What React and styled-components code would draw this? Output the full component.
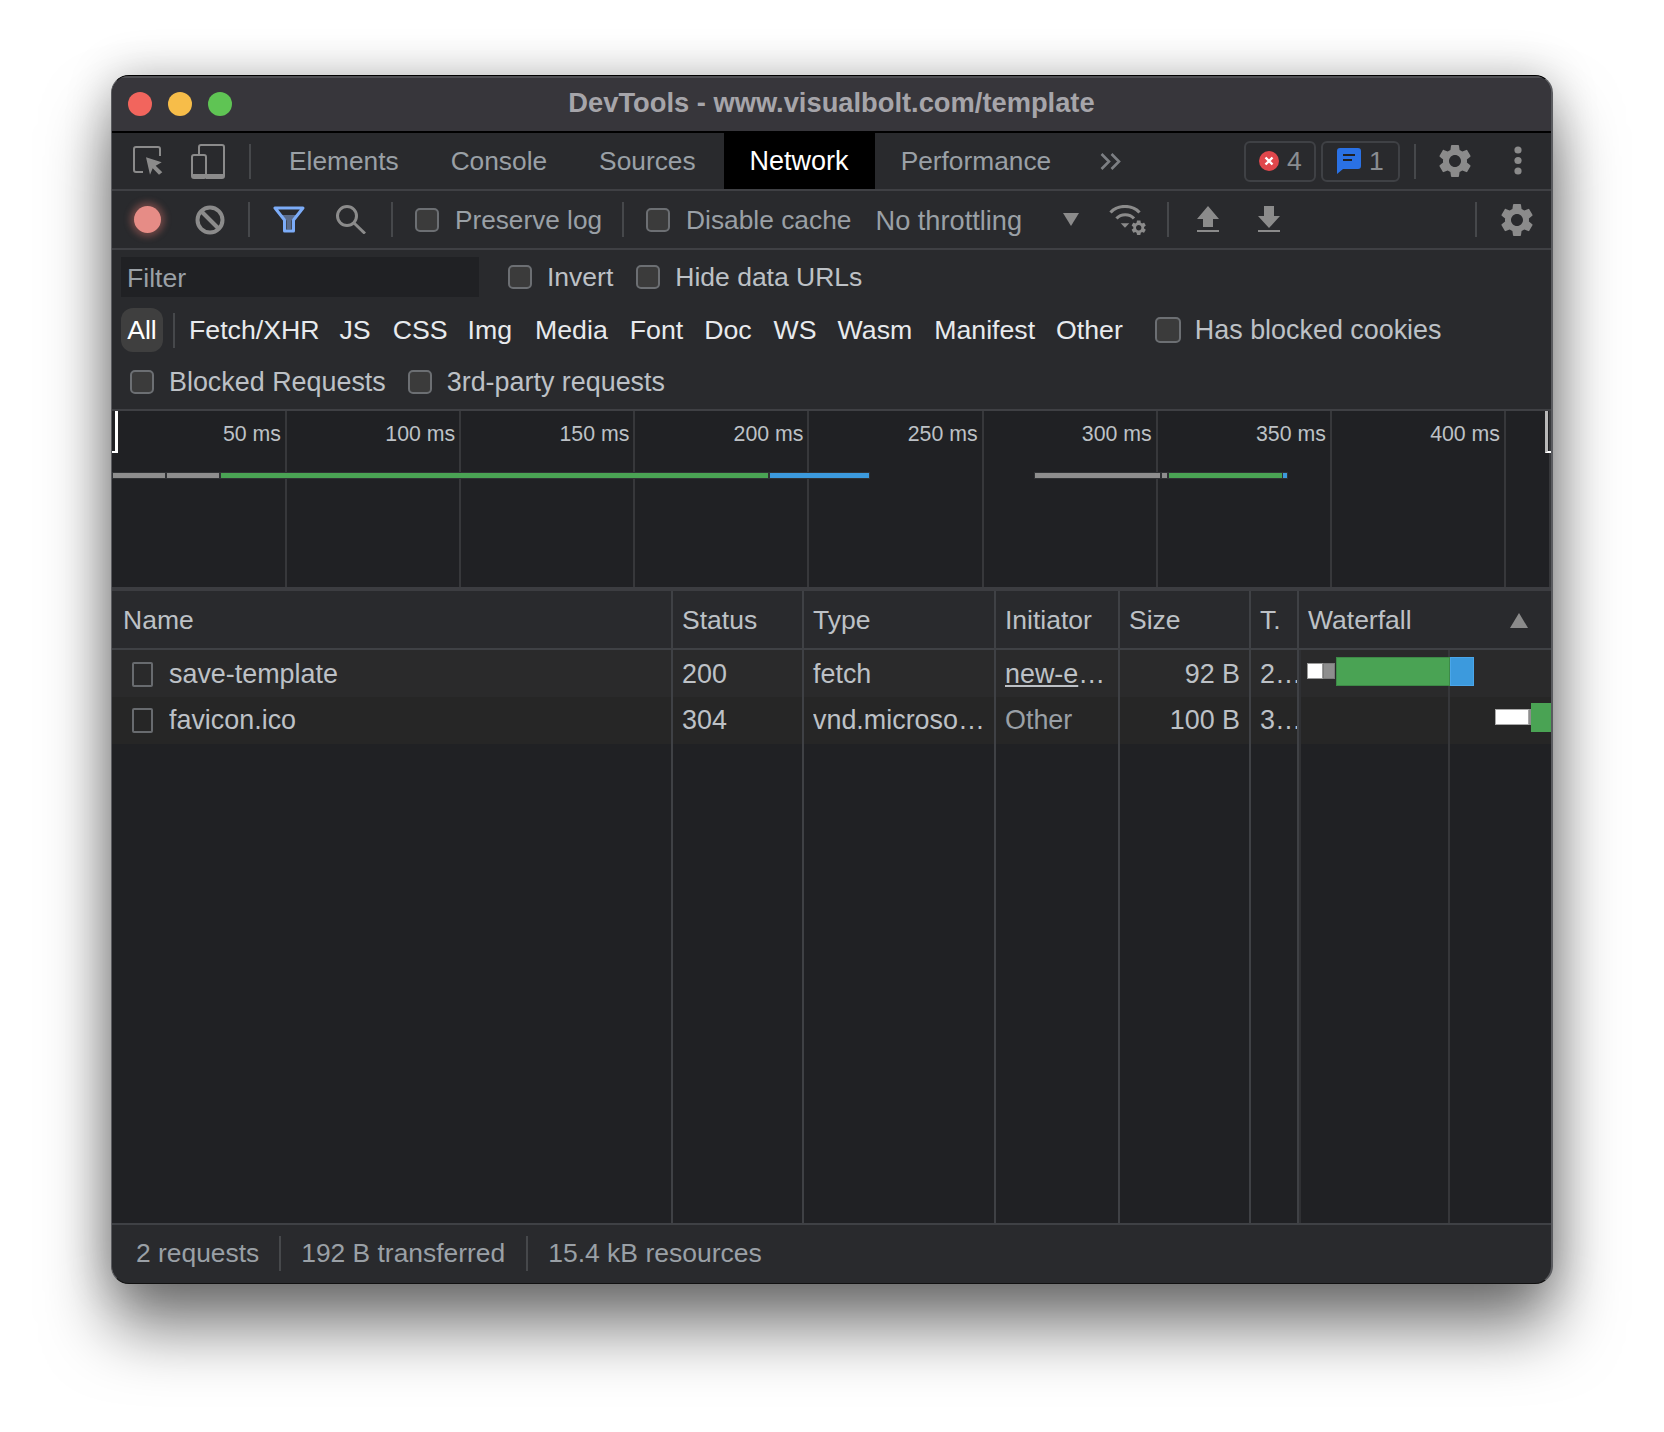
import React from 'react';
import styled, { createGlobalStyle, css } from 'styled-components';
import { MdSettings } from 'react-icons/md';

const GEAR =
    'M19.14 12.94c.04-.3.06-.61.06-.94 0-.32-.02-.64-.07-.94l2.03-1.58c.18-.14.23-.41.12-.61l-1.92-3.32c-.12-.22-.37-.29-.59-.22l-2.39.96c-.5-.38-1.03-.7-1.62-.94l-.36-2.54c-.04-.24-.24-.41-.48-.41h-3.84c-.24 0-.43.17-.47.41l-.36 2.54c-.59.24-1.13.57-1.62.94l-2.39-.96c-.22-.08-.47 0-.59.22L2.74 8.87c-.12.21-.08.47.12.61l2.03 1.58c-.05.3-.09.63-.09.94s.02.64.07.94l-2.03 1.58c-.18.14-.23.41-.12.61l1.92 3.32c.12.22.37.29.59.22l2.39-.96c.5.38 1.03.7 1.62.94l.36 2.54c.05.24.24.41.48.41h3.84c.24 0 .44-.17.47-.41l.36-2.54c.59-.24 1.13-.56 1.62-.94l2.39.96c.22.08.47 0 .59-.22l1.92-3.32c.12-.22.07-.47-.12-.61l-2.01-1.58zM12 15.6c-1.98 0-3.6-1.62-3.6-3.6s1.62-3.6 3.6-3.6 3.6 1.62 3.6 3.6-1.62 3.6-3.6 3.6z';

const GlobalStyle = createGlobalStyle`
    html, body {
        margin: 0;
        background: #ffffff;
    }
    body {
        font-family: "Liberation Sans", Arial, sans-serif;
        font-size: 26.6px;
    }
    * {
        box-sizing: border-box;
    }
`;

const spaced = css`
    margin-left: ${(p) => p.$ml || 0}px;
`;

const Page = styled.div`
    width: 1664px;
    height: 1432px;
    padding: 75px 0 0 111px;
    overflow: hidden;
`;

const Window = styled.div`
    width: 1442px;
    height: 1209px;
    display: flex;
    flex-direction: column;
    overflow: hidden;
    background: #292a2d;
    border: 1px solid #5a5b5f;
    border-right-width: 2px;
    border-top: 1px solid #000;
    border-bottom: 1px solid #111;
    border-radius: 18px;
    box-shadow: 0 44px 66px rgba(0, 0, 0, 0.52), 0 0 46px rgba(0, 0, 0, 0.24);
`;

const TitleBar = styled.div`
    height: 57px;
    flex: none;
    display: grid;
    grid-template-columns: 1fr auto 1fr;
    align-items: center;
    padding-bottom: 1px;
    background: #37363b;
    border-top: 2px solid #505054;
    border-bottom: 2px solid #000;
`;

const Lights = styled.div`
    display: flex;
    gap: 16px;
    padding-left: 16px;
`;

const Light = styled.span`
    width: 24px;
    height: 24px;
    border-radius: 50%;
    background: ${(p) => p.$color};
`;

const Title = styled.div`
    font-size: 27.3px;
    font-weight: 700;
    color: #a6a5aa;
    line-height: 30px;
    padding-bottom: 2px;
`;

const TabBar = styled.div`
    height: 58px;
    flex: none;
    display: flex;
    align-items: stretch;
    border-bottom: 2px solid #3f4044;
`;

const Tab = styled.div`
    display: flex;
    align-items: center;
    padding: 0 26px;
    font-size: ${(p) => (p.$active ? '27px' : '26.3px')};
    color: ${(p) => (p.$active ? '#ffffff' : '#9aa0a6')};
    background: ${(p) => (p.$active ? '#000000' : 'transparent')};
    ${spaced}
`;

const Sep = styled.span`
    flex: none;
    width: 2px;
    height: 35px;
    align-self: center;
    background: #46484b;
    ${spaced}
`;

const Icon = styled.svg`
    flex: none;
    display: block;
    align-self: center;
    ${spaced}
`;

const Gear = styled(MdSettings)`
    flex: none;
    align-self: center;
    color: #8b8b8b;
    ${spaced}
`;

const BadgeGroup = styled.div`
    display: flex;
    align-items: center;
    margin-left: auto;
    padding-right: 29px;
`;

const Badge = styled.div`
    height: 41px;
    width: ${(p) => p.$w}px;
    display: flex;
    align-items: center;
    gap: 8px;
    padding-left: ${(p) => p.$pad}px;
    color: #8a8d91;
    border: 2px solid #3f4145;
    border-radius: 6px;
    ${spaced}
`;

const Toolbar = styled.div`
    height: 59px;
    flex: none;
    display: flex;
    align-items: center;
    border-bottom: 2px solid #3f4044;
`;

const RecordDot = styled.span`
    flex: none;
    width: 27px;
    height: 27px;
    border-radius: 50%;
    background: #e68c86;
    box-shadow: 0 0 6px 4px rgba(230, 120, 110, 0.34);
    ${spaced}
`;

const Check = styled.span`
    flex: none;
    width: ${(p) => p.$size || 24}px;
    height: ${(p) => p.$size || 24}px;
    background: #3b3b3b;
    border: 2px solid #6c6f73;
    border-radius: 5px;
    ${spaced}
`;

const Label = styled.span`
    flex: none;
    white-space: nowrap;
    padding-top: ${(p) => p.$dy || 0}px;
    font-size: ${(p) => p.$size || 26.5}px;
    color: ${(p) => p.$color || '#9aa0a6'};
    ${spaced}
`;

const FilterRow = styled.div`
    display: flex;
    align-items: center;
    height: 54px;
    flex: none;
`;

const FilterInput = styled.div`
    width: 358px;
    height: 40px;
    margin-left: 9px;
    padding: 3px 0 0 6px;
    flex: none;
    display: flex;
    align-items: center;
    color: #9aa0a6;
    background: #202124;
`;

const TagRow = styled.div`
    height: 52px;
    flex: none;
    display: flex;
    align-items: center;
`;

const TagPill = styled.span`
    display: flex;
    align-items: center;
    justify-content: center;
    flex: none;
    width: 42px;
    height: 44px;
    margin-left: 9px;
    color: #ffffff;
    background: #3f3f3f;
    border-radius: 12px;
`;

const Tag = styled.span`
    flex: none;
    font-size: 26.7px;
    color: #e8eaed;
    ${spaced}
`;

const ThirdRow = styled.div`
    height: 53px;
    flex: none;
    display: flex;
    align-items: center;
    padding-bottom: 1px;
`;

const Overview = styled.div`
    height: 182px;
    flex: none;
    position: relative;
    display: grid;
    grid-template-columns: 175px repeat(7, 174.15px) 1fr;
    background: #202124;
    border-top: 2px solid #3f4044;
    border-bottom: 4px solid #3c3d41;
`;

const Tick = styled.div`
    padding: 9px 4px 0 0;
    text-align: right;
    font-size: 21.3px;
    line-height: 28px;
    color: #bdc1c6;
    border-right: 2px solid #37383b;
    &:last-child {
        border-right: 0;
    }
`;

const Handle = styled.span`
    position: absolute;
    top: 0;
    ${(p) => (p.$right ? 'right: 0;' : 'left: 0;')}
    width: 6px;
    height: 42px;
    border-bottom: 2px solid #fff;
    ${(p) => (p.$right ? 'border-left: 3px solid #b9b9b9;' : 'border-right: 3px solid #fff;')}
`;

const BarTrack = styled.div`
    position: absolute;
    left: 0;
    top: 62px;
    height: 6px;
    display: flex;
`;

const Seg = styled.span`
    flex: none;
    width: ${(p) => p.$w}px;
    height: 5px;
    background: ${(p) => p.$color};
    box-shadow: 0 0 0 1px #2f3134;
    ${spaced}
`;

const columns = css`
    display: grid;
    grid-template-columns: 561px 131px 192px 124px 131px 48px 1fr;
`;

const TableHead = styled.div`
    ${columns}
    height: 59px;
    flex: none;
    font-size: 26.5px;
    color: #bdc1c6;
    border-bottom: 2px solid #3f4145;
`;

const HeadCell = styled.div`
    display: flex;
    align-items: center;
    justify-content: space-between;
    padding: 2px ${(p) => (p.$last ? 23 : 0)}px 0 ${(p) => (p.$first ? 11 : 9)}px;
    overflow: hidden;
    white-space: nowrap;
    border-right: ${(p) => (p.$last ? 0 : '2px solid #3f4145')};
`;

const TableBody = styled.div`
    flex: 1;
    min-height: 0;
    display: flex;
    flex-direction: column;
    background: #202124;
`;

const Cell = styled.div`
    display: flex;
    align-items: center;
    gap: 16px;
    min-width: 0;
    padding: 0 ${(p) => (p.$end ? 9 : p.$tight ? 0 : 9)}px 0 ${(p) => (p.$first ? 20 : 9)}px;
    justify-content: ${(p) => (p.$end ? 'flex-end' : 'flex-start')};
    font-size: 26.9px;
    color: ${(p) => p.$color || '#bdc1c6'};
    border-right: 2px solid #3f4145;
`;

const Row = styled.div`
    ${columns}
    flex: ${(p) => (p.$fill ? '1' : 'none')};
    height: ${(p) => (p.$fill ? 'auto' : '47px')};
    background: ${(p) => p.$bg || 'transparent'};
`;

const FirstRow = styled(Row)`
    ${Cell} {
        padding-top: 2px;
    }
`;

const CellText = styled.span`
    display: block;
    min-width: 0;
    overflow: hidden;
    white-space: nowrap;
    text-overflow: ellipsis;
    text-decoration: ${(p) => (p.$link ? 'underline' : 'none')};
`;

const FileBox = styled.span`
    flex: none;
    width: 21px;
    height: 25px;
    border: 2px solid #686b6f;
    border-radius: 2px;
`;

const WaterfallCell = styled.div`
    display: flex;
    align-items: flex-start;
    overflow: hidden;
    padding-left: ${(p) => p.$pad || 0}px;
    border-left: 2px solid #2f3033;
    background-image: linear-gradient(#36373a, #36373a);
    background-repeat: no-repeat;
    background-size: 2px 100%;
    background-position: 147px 0;
`;

const WfBar = styled.span`
    flex: none;
    width: ${(p) => p.$w}px;
    height: ${(p) => p.$h}px;
    margin-top: ${(p) => p.$top}px;
    background: ${(p) => p.$color};
    box-shadow: inset 0 0 0 1px ${(p) => p.$edge};
    ${spaced}
`;

const Footer = styled.div`
    height: 60px;
    flex: none;
    display: flex;
    align-items: center;
    padding-bottom: 2px;
    color: #9aa0a6;
    border-top: 2px solid #3f4145;
`;

function InspectIcon() {
    return (
        <Icon $ml={21} width="30" height="30" viewBox="0 0 30 30">
            <path d="M10 26H3a2 2 0 0 1-2-2V3a2 2 0 0 1 2-2h22a2 2 0 0 1 2 2v7" fill="none" stroke="#8b8b8b" strokeWidth="2" />
            <path d="M13 11.3l15.7 5-6 3.4 6.600 6.600-3.300 2.400-6.300-6.400-2.700 6.400z" fill="#8b8b8b" />
        </Icon>
    );
}

function DeviceIcon() {
    return (
        <Icon $ml={28} width="34" height="35" viewBox="0 0 34 35">
            <path d="M8 11V3a2 2 0 0 1 2-2h21a2 2 0 0 1 2 2v29a2 2 0 0 1-2 2H15" fill="none" stroke="#8b8b8b" strokeWidth="2" />
            <rect x="1" y="11" width="14" height="23" rx="2" fill="none" stroke="#8b8b8b" strokeWidth="2" />
            <rect x="1" y="30" width="32" height="4" fill="#8b8b8b" />
        </Icon>
    );
}

function ChevronsIcon() {
    return (
        <Icon $ml={23} width="21" height="17" viewBox="0 0 21 17">
            <path d="M1.500 1l7.500 7.500-7.500 7.500M11.500 1l7.500 7.500-7.500 7.500" fill="none" stroke="#7c7f83" strokeWidth="2.600" />
        </Icon>
    );
}

function ErrorIcon() {
    return (
        <svg width="20" height="20" viewBox="0 0 20 20">
            <circle cx="10" cy="10" r="10" fill="#e0474c" />
            <path d="M6.500 6.500l7 7M13.500 6.500l-7 7" stroke="#fff" strokeWidth="2.400" />
        </svg>
    );
}

function MessageIcon() {
    return (
        <svg width="24" height="26" viewBox="0 0 24 26">
            <path d="M3 0h18a3 3 0 0 1 3 3v15a3 3 0 0 1-3 3H6l-6 5V3a3 3 0 0 1 3-3z" fill="#2a71e4" />
            <path d="M6 7h12M6 12h9" stroke="#202124" strokeWidth="2.200" />
        </svg>
    );
}

function DotsIcon() {
    return (
        <Icon $ml={39} width="8" height="30" viewBox="0 0 8 30">
            <circle cx="4" cy="4" r="3.600" fill="#8b8b8b" />
            <circle cx="4" cy="14.500" r="3.600" fill="#8b8b8b" />
            <circle cx="4" cy="25" r="3.600" fill="#8b8b8b" />
        </Icon>
    );
}

function BlockIcon() {
    return (
        <Icon $ml={34} width="30" height="30" viewBox="0 0 30 30">
            <circle cx="15" cy="15" r="12.500" fill="none" stroke="#8b8b8b" strokeWidth="4" />
            <path d="M6.500 6.500l17 17" stroke="#8b8b8b" strokeWidth="4" />
        </Icon>
    );
}

function FilterIcon() {
    return (
        <Icon $ml={23} width="32" height="27" viewBox="0 0 32 27">
            <path d="M8 9h16l-5.500 5.500V23.500h-5V14.500z" fill="#5b6c8a" />
            <path d="M2 2h28L20.500 14v11h-9V14z" fill="none" stroke="#7cacf8" strokeWidth="3" strokeLinejoin="round" />
        </Icon>
    );
}

function SearchIcon() {
    return (
        <Icon $ml={30} width="31" height="29" viewBox="0 0 31 29">
            <circle cx="12" cy="11" r="9.500" fill="none" stroke="#8b8b8b" strokeWidth="3" />
            <path d="M19 18l11 10.500" stroke="#8b8b8b" strokeWidth="3" />
        </Icon>
    );
}

function CaretIcon({ ml }) {
    return (
        <Icon $ml={ml} width="16" height="13" viewBox="0 0 16 13">
            <path d="M0 0h16L8 13z" fill="#8b8b8b" />
        </Icon>
    );
}

function SortIcon() {
    return (
        <Icon width="18" height="15" viewBox="0 0 18 15">
            <path d="M9 0l9 15H0z" fill="#8b8b8b" />
        </Icon>
    );
}

function WifiIcon() {
    return (
        <Icon $ml={30} width="37" height="30" viewBox="0 0 37 30">
            <path d="M1.500 7.500C9 -0.500 23 -0.500 30.500 7.500M7.500 13.500c4.500-5 13-5 17.500 0" fill="none" stroke="#8b8b8b" strokeWidth="3.200" />
            <path d="M11.700 18.300h8.600L16 22.700z" fill="#8b8b8b" />
            <path d={GEAR} fill="#8b8b8b" transform="translate(20.700 13.700) scale(.75)" />
        </Icon>
    );
}

function UploadIcon() {
    return (
        <Icon $ml={28} width="22" height="27" viewBox="0 0 22 27">
            <path d="M11 0l11 13h-6v8H6v-8H0z" fill="#8b8b8b" />
            <rect y="24" width="22" height="2" fill="#8b8b8b" />
        </Icon>
    );
}

function DownloadIcon() {
    return (
        <Icon $ml={39} width="22" height="27" viewBox="0 0 22 27">
            <path d="M6 0h10v10h6L11 22 0 10h6z" fill="#8b8b8b" />
            <rect y="24" width="22" height="2" fill="#8b8b8b" />
        </Icon>
    );
}

const ticks = ['50 ms', '100 ms', '150 ms', '200 ms', '250 ms', '300 ms', '350 ms', '400 ms', ''];

const tags = [
    ['Fetch/XHR', 14],
    ['JS', 20],
    ['CSS', 22],
    ['Img', 20],
    ['Media', 23],
    ['Font', 22],
    ['Doc', 21],
    ['WS', 22],
    ['Wasm', 21],
    ['Manifest', 22],
    ['Other', 21],
];

const segs = [
    { w: 52, c: '#8e8e8e', ml: 1 },
    { w: 52, c: '#8e8e8e', ml: 2 },
    { w: 547, c: '#4aa354', ml: 2 },
    { w: 99, c: '#3c9add', ml: 2 },
    { w: 125, c: '#8e8e8e', ml: 166 },
    { w: 5, c: '#8e8e8e', ml: 2 },
    { w: 113, c: '#4aa354', ml: 2 },
    { w: 4, c: '#3c9add', ml: 1 },
];

const headers = ['Status', 'Type', 'Initiator', 'Size', 'T.'];

function App() {
    return (
        <Page>
            <GlobalStyle />
            <Window>
                <TitleBar>
                    <Lights>
                        <Light $color="#f2655d" />
                        <Light $color="#f7bd49" />
                        <Light $color="#5fc454" />
                    </Lights>
                    <Title>DevTools - www.visualbolt.com/template</Title>
                </TitleBar>
                <TabBar>
                    <InspectIcon />
                    <DeviceIcon />
                    <Sep $ml={24} />
                    <Tab $ml={12}>Elements</Tab>
                    <Tab>Console</Tab>
                    <Tab>Sources</Tab>
                    <Tab $active $ml={2}>
                        Network
                    </Tab>
                    <Tab>Performance</Tab>
                    <ChevronsIcon />
                    <BadgeGroup>
                        <Badge $w={72} $pad={13}>
                            <ErrorIcon />4
                        </Badge>
                        <Badge $w={79} $pad={14} $ml={5}>
                            <MessageIcon />1
                        </Badge>
                        <Sep $ml={14} />
                        <Gear size={40} $ml={19} />
                        <DotsIcon />
                    </BadgeGroup>
                </TabBar>
                <Toolbar>
                    <RecordDot $ml={22} />
                    <BlockIcon />
                    <Sep $ml={23} />
                    <FilterIcon />
                    <SearchIcon />
                    <Sep $ml={25} />
                    <Check $ml={22} />
                    <Label $ml={16} $dy={2} $size={26.2}>
                        Preserve log
                    </Label>
                    <Sep $ml={20} />
                    <Check $ml={22} />
                    <Label $ml={16} $dy={2} $size={26.35}>
                        Disable cache
                    </Label>
                    <Label $ml={24} $dy={2} $size={27.2}>
                        No throttling
                    </Label>
                    <CaretIcon ml={41} />
                    <WifiIcon />
                    <Sep $ml={21} />
                    <UploadIcon />
                    <DownloadIcon />
                    <Sep $ml={195} />
                    <Gear size={40} $ml={20} />
                </Toolbar>
                <FilterRow>
                    <FilterInput>Filter</FilterInput>
                    <Check $ml={29} />
                    <Label $ml={15} $color="#bdc1c6">
                        Invert
                    </Label>
                    <Check $ml={23} />
                    <Label $ml={15} $color="#bdc1c6">
                        Hide data URLs
                    </Label>
                </FilterRow>
                <TagRow>
                    <TagPill>All</TagPill>
                    <Sep $ml={10} />
                    {tags.map(([name, ml]) => (
                        <Tag key={name} $ml={ml}>
                            {name}
                        </Tag>
                    ))}
                    <Check $ml={32} $size={26} />
                    <Label $ml={14} $size={26.9} $color="#bdc1c6">
                        Has blocked cookies
                    </Label>
                </TagRow>
                <ThirdRow>
                    <Check $ml={18} />
                    <Label $ml={15} $size={26.9} $color="#bdc1c6">
                        Blocked Requests
                    </Label>
                    <Check $ml={22} />
                    <Label $ml={15} $size={26.9} $color="#bdc1c6">
                        3rd-party requests
                    </Label>
                </ThirdRow>
                <Overview>
                    {ticks.map((t, i) => (
                        <Tick key={i}>{t}</Tick>
                    ))}
                    <Handle />
                    <Handle $right />
                    <BarTrack>
                        {segs.map((s, i) => (
                            <Seg key={i} $w={s.w} $color={s.c} $ml={s.ml} />
                        ))}
                    </BarTrack>
                </Overview>
                <TableHead>
                    <HeadCell $first>Name</HeadCell>
                    {headers.map((h) => (
                        <HeadCell key={h}>{h}</HeadCell>
                    ))}
                    <HeadCell $last>
                        Waterfall
                        <SortIcon />
                    </HeadCell>
                </TableHead>
                <TableBody>
                    <FirstRow $bg="#2a2a2b">
                        <Cell $first>
                            <FileBox />
                            <CellText>save-template</CellText>
                        </Cell>
                        <Cell>200</Cell>
                        <Cell>fetch</Cell>
                        <Cell>
                            <CellText $link>new-editor.js</CellText>
                        </Cell>
                        <Cell $end>92 B</Cell>
                        <Cell $tight>
                            <CellText>240 ms</CellText>
                        </Cell>
                        <WaterfallCell $pad={6}>
                            <WfBar $w={16} $h={16} $top={13} $color="#ffffff" $edge="#9a9a9a" />
                            <WfBar $w={12} $h={16} $top={13} $color="#8e8e8e" $edge="#7a7a7a" />
                            <WfBar $w={114} $h={29} $top={7} $ml={1} $color="#4aa354" $edge="#3d8a47" />
                            <WfBar $w={24} $h={29} $top={7} $color="#3c9add" $edge="#4aa6ea" />
                        </WaterfallCell>
                    </FirstRow>
                    <Row $bg="#262626">
                        <Cell $first>
                            <FileBox />
                            <CellText>favicon.ico</CellText>
                        </Cell>
                        <Cell>304</Cell>
                        <Cell>
                            <CellText>vnd.microsoft.icon</CellText>
                        </Cell>
                        <Cell $color="#9aa0a6">Other</Cell>
                        <Cell $end>100 B</Cell>
                        <Cell $tight>
                            <CellText>360 ms</CellText>
                        </Cell>
                        <WaterfallCell $pad={194}>
                            <WfBar $w={34} $h={16} $top={12} $color="#ffffff" $edge="#a8a8a8" />
                            <WfBar $w={2} $h={16} $top={12} $color="#8e8e8e" $edge="#8e8e8e" />
                            <WfBar $w={21} $h={29} $top={6} $color="#4aa354" $edge="#4aa354" />
                        </WaterfallCell>
                    </Row>
                    <Row $fill>
                        <Cell />
                        <Cell />
                        <Cell />
                        <Cell />
                        <Cell />
                        <Cell />
                        <WaterfallCell />
                    </Row>
                </TableBody>
                <Footer>
                    <Label $ml={24} $size={26.4} $color="#9aa0a6">
                        2 requests
                    </Label>
                    <Sep $ml={20} />
                    <Label $ml={20} $size={26.4} $color="#9aa0a6">
                        192 B transferred
                    </Label>
                    <Sep $ml={21} />
                    <Label $ml={20} $size={26.5} $color="#9aa0a6">
                        15.4 kB resources
                    </Label>
                </Footer>
            </Window>
        </Page>
    );
}

export default App;
